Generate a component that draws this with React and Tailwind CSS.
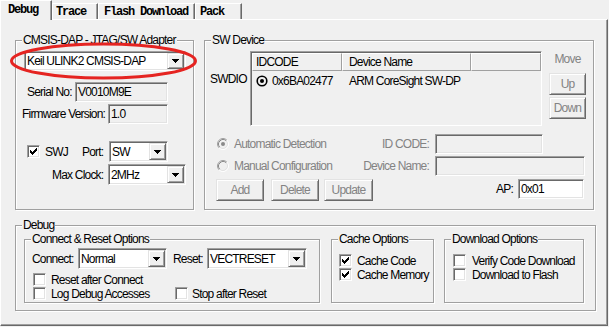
import React from "react";

const SUNKEN =
  "border border-t-[#a0a0a0] border-l-[#a0a0a0] border-r-white border-b-white shadow-[inset_1px_1px_0_#696969,inset_-1px_-1px_0_#e3e3e3]";
const RAISED =
  "border border-t-[#e3e3e3] border-l-[#e3e3e3] border-r-[#696969] border-b-[#696969] shadow-[inset_1px_1px_0_#fff,inset_-1px_-1px_0_#a0a0a0]";
const GRAY = "text-[#838383]";

function Arrow() {
  return (
    <svg width="7" height="4" viewBox="0 0 7 4" shapeRendering="crispEdges">
      <path d="M0 0h7v1h-1v1h-1v1h-1v1h-1v-1h-1v-1h-1v-1h-1z" fill="#000" />
    </svg>
  );
}

function Combo({ className = "", text }) {
  return (
    <div className={`flex bg-white ${SUNKEN} ${className}`}>
      <div className="flex-1 flex items-center pl-[2px] whitespace-nowrap overflow-hidden">{text}</div>
      <div className={`w-[17px] my-[1px] mr-[1px] flex items-center justify-center bg-[#f0f0f0] ${RAISED}`}>
        <Arrow />
      </div>
    </div>
  );
}

function Field({ className = "", text = "", bg = "bg-[#f0f0f0]" }) {
  return (
    <div className={`flex items-center pl-[2px] whitespace-nowrap ${SUNKEN} ${bg} ${className}`}>{text}</div>
  );
}

function Btn({ className = "", children }) {
  return (
    <div className={`flex items-center justify-center bg-[#f0f0f0] ${RAISED} ${GRAY} ${className}`}>{children}</div>
  );
}

function Check({ checked }) {
  return (
    <div className={`w-[13px] h-[13px] shrink-0 bg-white ${SUNKEN} flex items-center justify-center`}>
      {checked && (
        <svg width="7" height="7" viewBox="0 0 7 7" shapeRendering="crispEdges">
          <path
            d="M6 0h1v1h-1z M5 1h2v1h-2z M0 2h1v1h-1z M4 2h3v1h-3z M0 3h2v1h-2z M3 3h3v1h-3z M0 4h5v1h-5z M1 5h3v1h-3z M2 6h1v1h-1z"
            fill="#000"
          />
        </svg>
      )}
    </div>
  );
}

function Radio({ checked }) {
  return (
    <svg width="12" height="12" viewBox="0 0 12 12" className="shrink-0">
      <circle cx="6" cy="6" r="5" fill="#f0f0f0" />
      <path d="M2.11 9.89 A5.5 5.5 0 0 1 9.89 2.11" fill="none" stroke="#a0a0a0" />
      <path d="M9.89 2.11 A5.5 5.5 0 0 1 2.11 9.89" fill="none" stroke="#ffffff" />
      <path d="M2.82 9.18 A4.5 4.5 0 0 1 9.18 2.82" fill="none" stroke="#8a8a8a" />
      <path d="M9.18 2.82 A4.5 4.5 0 0 1 2.82 9.18" fill="none" stroke="#e3e3e3" />
      {checked && <circle cx="6" cy="6" r="2" fill="#8a8a8a" />}
    </svg>
  );
}

function ListRadio() {
  return (
    <svg width="12" height="12" viewBox="0 0 12 12" className="shrink-0">
      <circle cx="6" cy="6" r="4.8" fill="none" stroke="#000" strokeWidth="1.6" />
      <circle cx="6" cy="6" r="2" fill="#000" />
    </svg>
  );
}

function Group({ label, className = "", children }) {
  return (
    <div
      className={`relative border border-[#a0a0a0] shadow-[inset_1px_1px_0_#fff,1px_1px_0_#fff] ${className}`}
    >
      <div className="absolute -top-[8px] left-[6px] px-[1px] bg-[#f0f0f0] leading-[14px] whitespace-nowrap">
        {label}
      </div>
      {children}
    </div>
  );
}

function Tab({ label, selected, className = "" }) {
  return (
    <div
      className={`flex shrink-0 border-l border-t border-white border-r border-r-[#696969] shadow-[inset_-1px_0_0_#a0a0a0] bg-[#f0f0f0] font-['Liberation_Mono',monospace] font-bold text-[12px] tracking-[-1.2px] leading-[12px] ${
        selected ? "h-[20px] -mb-[1px] relative z-10 pt-[3px]" : "h-[16px] pt-[2px]"
      } ${className}`}
    >
      {label}
    </div>
  );
}

export default function App() {
  return (
    <div className="w-[609px] h-[327px] bg-[#f0f0f0] relative overflow-hidden font-['Liberation_Sans',Arial,sans-serif] text-[12px] tracking-[-0.8px] leading-[14px] text-black">
      {/* Tabs */}
      <div className="flex items-end h-[19px]">
        <Tab label="Debug" selected className="w-[52px] pl-[7px]" />
        <Tab label="Trace" className="w-[46px] pl-[3px]" />
        <Tab label="Flash Download" className="w-[97px] pl-[5px]" />
        <Tab label="Pack" className="w-[47px] pl-[4px]" />
      </div>

      {/* Panel */}
      <div className="w-[608px] h-[307px] border-l border-t border-white border-r border-b border-r-[#696969] border-b-[#696969] shadow-[inset_-1px_-1px_0_#a0a0a0] pt-[20px] pl-[14px]">
        <div className="flex gap-[10px]">
          {/* Adapter group */}
          <Group label="CMSIS-DAP - JTAG/SW Adapter" className="w-[179px] h-[170px]">
            <div className="flex flex-col">
              <Combo className="ml-[8px] mt-[10px] w-[162px] h-[20px]" text="Keil ULINK2 CMSIS-DAP" />
              <div className="flex items-center mt-[11px] pl-[11px]">
                <span className="w-[48px] whitespace-nowrap">Serial No:</span>
                <Field className="w-[93px] h-[20px]" text="V0010M9E" />
              </div>
              <div className="flex items-center mt-[2px] pl-[6px]">
                <span className="w-[86px] whitespace-nowrap">Firmware Version:</span>
                <Field className="w-[60px] h-[20px]" text="1.0" />
              </div>
              <div className="flex items-center mt-[17px] pl-[11px]">
                <Check checked />
                <span className="ml-[5px] w-[37px]">SWJ</span>
                <span className="w-[27px]">Port:</span>
                <Combo className="w-[59px] h-[21px]" text="SW" />
              </div>
              <div className="flex items-center mt-[2px] pl-[36px]">
                <span className="w-[56px] whitespace-nowrap">Max Clock:</span>
                <Combo className="w-[78px] h-[21px]" text="2MHz" />
              </div>
            </div>
          </Group>

          {/* SW Device group */}
          <Group label="SW Device" className="w-[390px] h-[170px]">
            <div className="flex flex-col">
              <div className="flex mt-[10px]">
                <span className="w-[45px] pl-[5px] mt-[21px]">SWDIO</span>
                <div
                  className={`w-[292px] h-[75px] border border-t-[#a0a0a0] border-l-[#a0a0a0] border-r-white border-b-white shadow-[inset_1px_1px_0_#696969] pt-[1px] pl-[1px] flex flex-col`}
                >
                  <div className="flex h-[18px]">
                    <div className="w-[90px] pl-[3px] flex items-center border border-t-white border-l-white border-r-[#a0a0a0] border-b-[#a0a0a0]">
                      IDCODE
                    </div>
                    <div className="w-[129px] pl-[6px] flex items-center border border-t-white border-l-white border-r-[#a0a0a0] border-b-[#a0a0a0]">
                      Device Name
                    </div>
                    <div className="flex-1 border border-t-white border-l-white border-r-[#a0a0a0] border-b-[#a0a0a0]" />
                  </div>
                  <div className="flex items-center h-[16px] mt-[2px]">
                    <div className="w-[97px] flex items-center pl-[4px]">
                      <ListRadio />
                      <span className="ml-[4px]">0x6BA02477</span>
                    </div>
                    <span>ARM CoreSight SW-DP</span>
                  </div>
                </div>
                <div className="ml-[7px] w-[37px] flex flex-col items-center">
                  <span className={`${GRAY} mt-[1px]`}>Move</span>
                  <Btn className="mt-[7px] w-[37px] h-[22px]">Up</Btn>
                  <Btn className="mt-[2px] w-[37px] h-[22px]">Down</Btn>
                </div>
              </div>

              <div className="flex items-center mt-[8px] h-[20px]">
                <div className={`w-[230px] flex items-center pl-[12px] pr-[6px] ${GRAY}`}>
                  <Radio checked />
                  <span className="ml-[5px] whitespace-nowrap">Automatic Detection</span>
                  <span className="ml-auto">ID CODE:</span>
                </div>
                <Field className="w-[108px] h-[20px]" />
              </div>
              <div className="flex items-center mt-[2px] h-[20px]">
                <div className={`w-[230px] flex items-center pl-[12px] pr-[6px] ${GRAY}`}>
                  <Radio />
                  <span className="ml-[5px] whitespace-nowrap">Manual Configuration</span>
                  <span className="ml-auto whitespace-nowrap">Device Name:</span>
                </div>
                <Field className="w-[150px] h-[20px]" />
              </div>
              <div className="flex items-start mt-[3px] pl-[11px]">
                <Btn className="w-[48px] h-[22px]">Add</Btn>
                <Btn className="ml-[7px] w-[48px] h-[22px]">Delete</Btn>
                <Btn className="ml-[5px] w-[49px] h-[22px]">Update</Btn>
                <span className="ml-auto mr-[5px] mt-[3px]">AP:</span>
                <Field className="w-[66px] h-[20px] mr-[9px]" bg="bg-white" text="0x01" />
              </div>
            </div>
          </Group>
        </div>

        {/* Debug group */}
        <Group label="Debug" className="mt-[15px] w-[581px] h-[86px]">
          <div className="flex mt-[13px] ml-[8px]">
            <Group label="Connect & Reset Options" className="w-[296px] h-[64px]">
              <div className="flex flex-col">
                <div className="flex items-center mt-[8px] pl-[7px]">
                  <span className="w-[46px]">Connect:</span>
                  <Combo className="w-[89px] h-[21px]" text="Normal" />
                  <span className="ml-[6px] w-[34px]">Reset:</span>
                  <Combo className="w-[100px] h-[21px]" text="VECTRESET" />
                </div>
                <div className="flex items-center mt-[4px] h-[13px] pl-[8px]">
                  <Check />
                  <span className="ml-[5px] whitespace-nowrap">Reset after Connect</span>
                </div>
                <div className="flex items-center mt-[1px] h-[13px] pl-[8px]">
                  <div className="w-[142px] flex items-center">
                    <Check />
                    <span className="ml-[5px] whitespace-nowrap">Log Debug Accesses</span>
                  </div>
                  <Check />
                  <span className="ml-[4px] whitespace-nowrap">Stop after Reset</span>
                </div>
              </div>
            </Group>

            <Group label="Cache Options" className="ml-[11px] w-[103px] h-[64px]">
              <div className="flex flex-col gap-[1px] mt-[14px] pl-[7px]">
                <div className="flex items-center h-[13px]">
                  <Check checked />
                  <span className="ml-[5px] whitespace-nowrap">Cache Code</span>
                </div>
                <div className="flex items-center h-[13px]">
                  <Check checked />
                  <span className="ml-[5px] whitespace-nowrap">Cache Memory</span>
                </div>
              </div>
            </Group>

            <Group label="Download Options" className="ml-[10px] w-[140px] h-[64px]">
              <div className="flex flex-col gap-[1px] mt-[14px] pl-[8px]">
                <div className="flex items-center h-[13px]">
                  <Check />
                  <span className="ml-[6px] whitespace-nowrap">Verify Code Download</span>
                </div>
                <div className="flex items-center h-[13px]">
                  <Check />
                  <span className="ml-[6px] whitespace-nowrap">Download to Flash</span>
                </div>
              </div>
            </Group>
          </div>
        </Group>
      </div>

      {/* Red annotation ellipse */}
      <svg className="absolute left-0 top-0 pointer-events-none" width="609" height="327">
        <ellipse cx="103.5" cy="61" rx="92" ry="17" fill="none" stroke="#e52421" strokeWidth="3" />
      </svg>
    </div>
  );
}
